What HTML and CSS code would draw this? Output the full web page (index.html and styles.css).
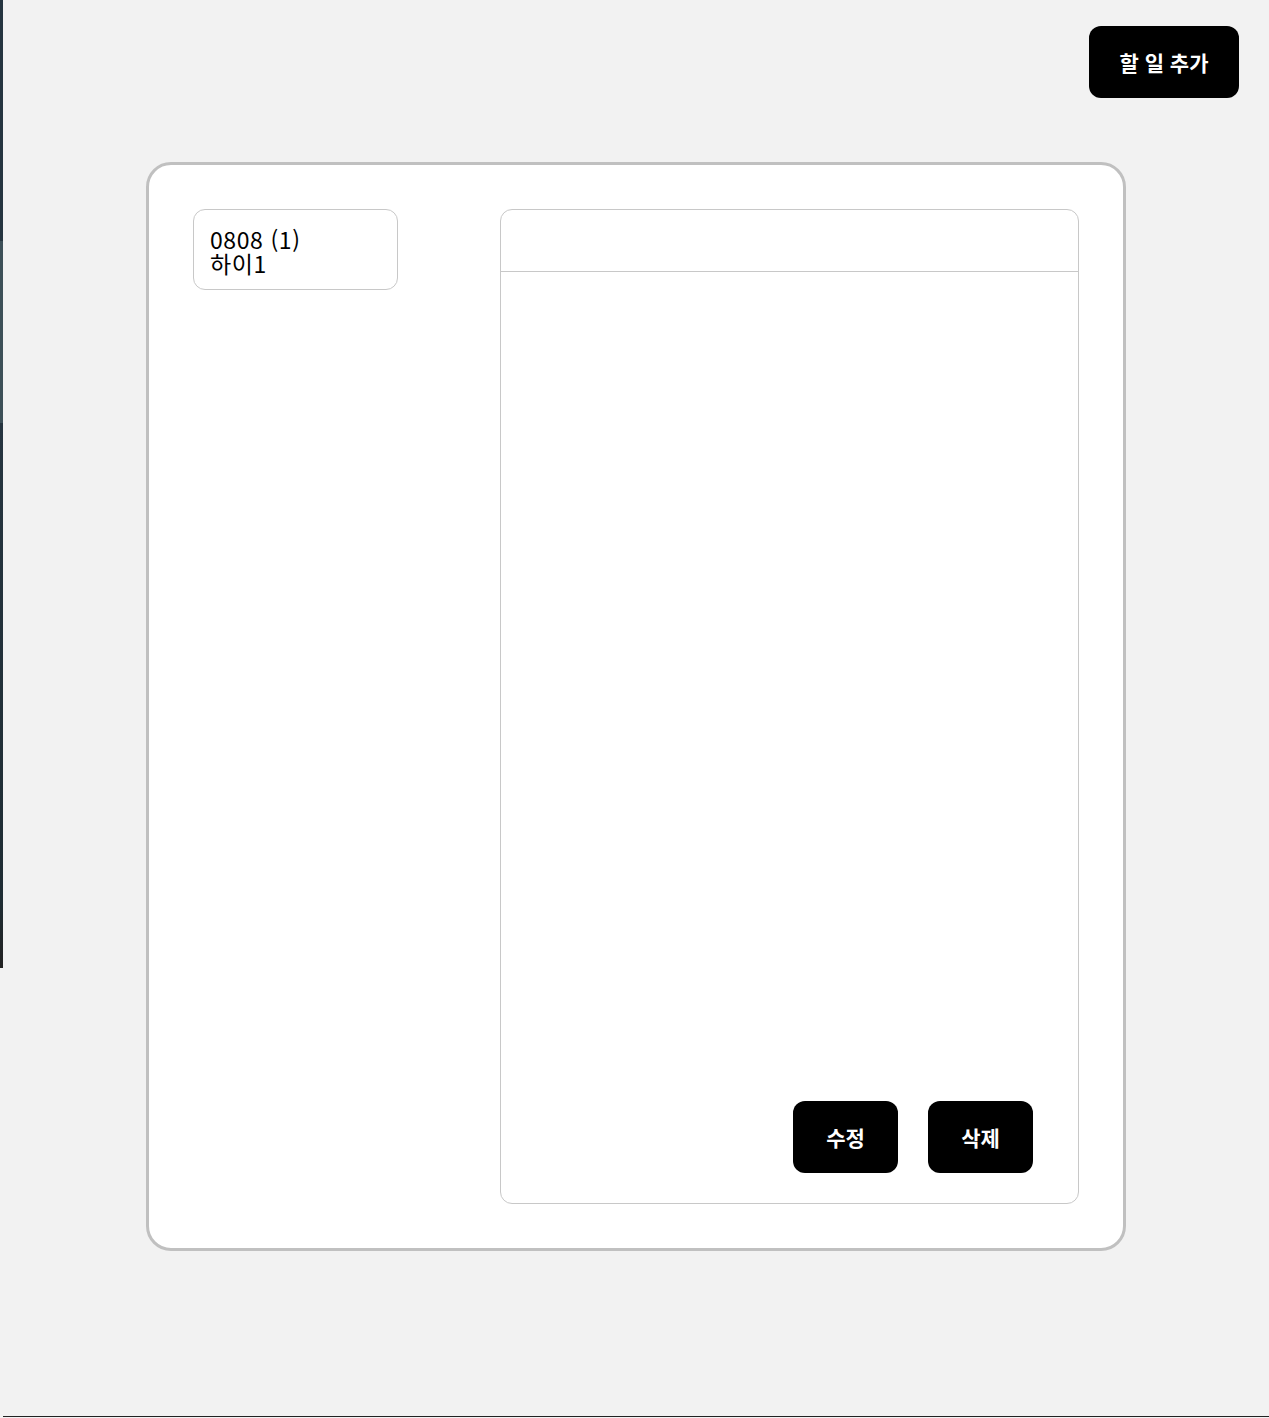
FILE: index.html
```html
<!DOCTYPE html>
<html lang="ko">
<head>
<meta charset="utf-8">
<title>할 일</title>
<link rel="stylesheet" href="styles.css">
</head>
<body>
<div class="edge"></div>
<div class="page">
  <header class="topbar">
    <button class="btn btn-add">할 일 추가</button>
  </header>
  <main class="board">
    <aside class="list">
      <div class="item">
        <div class="item-title">0808 (1)</div>
        <div class="item-body">하이1</div>
      </div>
    </aside>
    <section class="detail">
      <div class="detail-head"></div>
      <div class="detail-body">
        <div class="actions">
          <button class="btn btn-small">수정</button>
          <button class="btn btn-small">삭제</button>
        </div>
      </div>
    </section>
  </main>
</div>
</body>
</html>
```
FILE: styles.css
```css
* { box-sizing: border-box; }
html, body { margin: 0; padding: 0; }
body {
  background: #f2f2f2;
  display: flex;
  align-items: flex-start;
  font-family: "Noto Sans CJK KR", "Noto Sans", sans-serif;
  color: #000;
}
.edge {
  width: 3px;
  height: 968px;
  flex: none;
  background: linear-gradient(to bottom,
    #263540 0px, #263540 241px,
    #3d5058 241px, #3d5058 423px,
    #263540 423px, #1f2d34 900px, #222 968px);
}
.page {
  flex: 1;
  height: 1417px;
  border-bottom: 1px solid #222;
  display: flex;
  flex-direction: column;
  align-items: center;
}
.topbar {
  align-self: stretch;
  display: flex;
  justify-content: flex-end;
  padding: 26px 30px 0 0;
}
.btn {
  background: #000;
  color: #fff;
  border: none;
  border-radius: 12px;
  font-family: "Noto Sans CJK KR", "Noto Sans", sans-serif;
  font-weight: 700;
  font-size: 21px;
  display: flex;
  align-items: center;
  justify-content: center;
  padding: 0;
}
.btn-add { width: 150px; height: 72px; }
.btn-small { width: 105px; height: 72px; }
.board {
  margin-top: 64px;
  width: 980px;
  height: 1089px;
  background: #fff;
  border: 3px solid #c0c0c0;
  border-radius: 25px;
  padding: 44px;
  display: grid;
  grid-template-columns: 205px 1fr;
  column-gap: 102px;
}
.list { display: flex; flex-direction: column; }
.item {
  height: 81px;
  border: 1px solid #c8c8c8;
  border-radius: 12px;
  padding: 17px 16px 0;
  font-size: 23px;
  line-height: 24px;
  letter-spacing: 0.6px;
}
.detail {
  border: 1px solid #c8c8c8;
  border-radius: 12px;
  display: flex;
  flex-direction: column;
}
.detail-head {
  height: 62px;
  border-bottom: 1px solid #c8c8c8;
  flex: none;
}
.detail-body {
  flex: 1;
  display: flex;
  flex-direction: column;
  justify-content: flex-end;
  padding: 0 45px 30px 0;
}
.actions {
  display: flex;
  justify-content: flex-end;
  gap: 30px;
}
```
